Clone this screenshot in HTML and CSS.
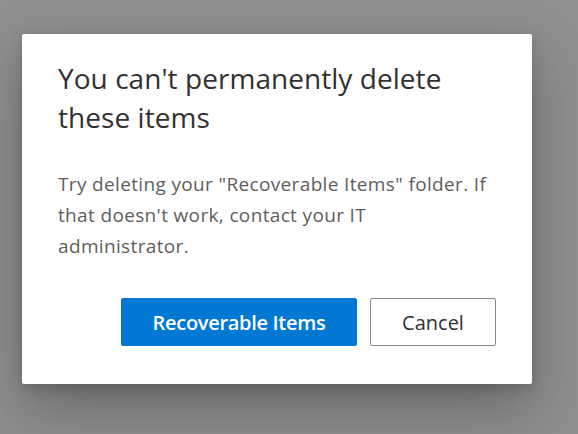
FILE: index.html
```html
<!DOCTYPE html>
<html>
<head>
<meta charset="utf-8">
<link rel="stylesheet" href="styles.css">
</head>
<body>
<div class="dialog">
  <h1 class="title">You can't permanently delete these items</h1>
  <p class="message">Try deleting your "Recoverable Items" folder. If that doesn't work, contact your IT administrator.</p>
  <div class="actions">
    <button class="btn primary">Recoverable Items</button>
    <button class="btn secondary">Cancel</button>
  </div>
</div>
</body>
</html>
```
FILE: styles.css
```css
html, body {
  margin: 0;
  padding: 0;
}
body {
  width: 578px;
  height: 434px;
  background: #8f8f8f;
  font-family: "Open Sans", "Noto Sans", sans-serif;
  overflow: hidden;
}
.dialog {
  box-sizing: border-box;
  margin: 34px 0 0 22px;
  width: 510px;
  height: 350px;
  background: #ffffff;
  border-radius: 2px;
  box-shadow: 0 26px 58px rgba(0,0,0,0.26), 0 5px 14px rgba(0,0,0,0.16);
  padding: 25px 36px 0 36px;
  display: flex;
  flex-direction: column;
}
.title {
  margin: 0;
  font-size: 28px;
  font-weight: 400;
  line-height: 39px;
  color: #323130;
  letter-spacing: 0.05px;
}
.message {
  margin: 32px 0 0 0;
  font-size: 19px;
  line-height: 31px;
  color: #605e5c;
  letter-spacing: 0.35px;
}
.actions {
  display: flex;
  justify-content: flex-end;
  gap: 13px;
  margin-top: 36px;
}
.btn {
  box-sizing: border-box;
  height: 48px;
  border-radius: 2px;
  font-family: "Open Sans", "Noto Sans", sans-serif;
  font-size: 20px;
  padding: 0;
  cursor: pointer;
}
.primary {
  width: 236px;
  background: #0078d4;
  border: 1px solid #0078d4;
  color: #ffffff;
  font-weight: 600;
  letter-spacing: -0.3px;
}
.secondary {
  width: 126px;
  background: #ffffff;
  border: 1px solid #8a8886;
  color: #323130;
  font-weight: 400;
}
```
